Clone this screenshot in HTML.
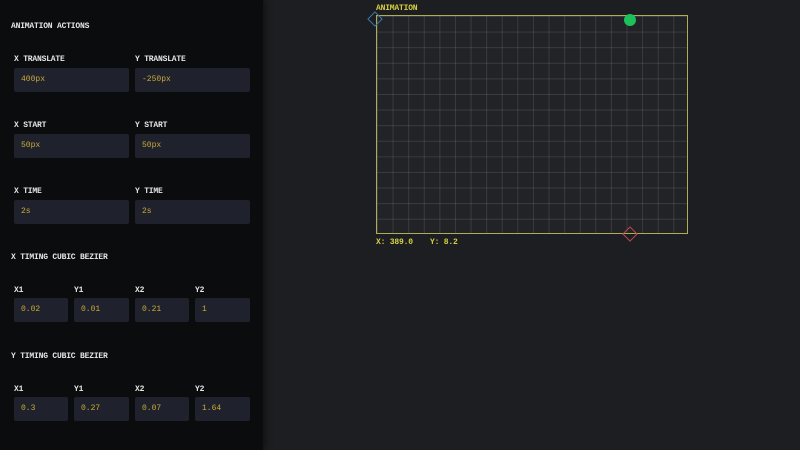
<!DOCTYPE html>
<html><head><style>
*{margin:0;padding:0;box-sizing:border-box}
body{width:800px;height:450px;background:#1d1e21;position:relative;overflow:hidden;font-family:"Liberation Mono",monospace;font-size:8px;font-weight:bold}
.panel{position:absolute;left:0;top:0;width:263px;height:450px;background:#0b0c0e;box-shadow:2px 0 6px rgba(0,0,0,.5)}
.t{position:absolute;color:#e6e6e6;white-space:nowrap;line-height:10px;letter-spacing:-0.2px}
.in{position:absolute;height:24px;background:#1f222c;border-radius:2px;color:#c9a93a;padding-left:7px;line-height:24px;font-weight:normal;font-size:8px}
.y{color:#d8d040}
</style></head><body>
<div class="panel">
<div class="t" style="left:11px;top:22px">ANIMATION ACTIONS</div>
<div class="t" style="left:14px;top:55px">X TRANSLATE</div><div class="t" style="left:135px;top:55px">Y TRANSLATE</div>
<div class="in" style="left:14px;top:68px;width:115px">400px</div><div class="in" style="left:135px;top:68px;width:115px">-250px</div>
<div class="t" style="left:14px;top:121px">X START</div><div class="t" style="left:135px;top:121px">Y START</div>
<div class="in" style="left:14px;top:134px;width:115px">50px</div><div class="in" style="left:135px;top:134px;width:115px">50px</div>
<div class="t" style="left:14px;top:187px">X TIME</div><div class="t" style="left:135px;top:187px">Y TIME</div>
<div class="in" style="left:14px;top:200px;width:115px">2s</div><div class="in" style="left:135px;top:200px;width:115px">2s</div>
<div class="t" style="left:11px;top:253px">X TIMING CUBIC BEZIER</div>
<div class="t" style="left:14px;top:286px">X1</div><div class="t" style="left:74px;top:286px">Y1</div><div class="t" style="left:135px;top:286px">X2</div><div class="t" style="left:195px;top:286px">Y2</div>
<div class="in" style="left:14px;top:298px;width:54px">0.02</div><div class="in" style="left:74px;top:298px;width:55px">0.01</div><div class="in" style="left:135px;top:298px;width:54px">0.21</div><div class="in" style="left:195px;top:298px;width:55px">1</div>
<div class="t" style="left:11px;top:352px">Y TIMING CUBIC BEZIER</div>
<div class="t" style="left:14px;top:385px">X1</div><div class="t" style="left:74px;top:385px">Y1</div><div class="t" style="left:135px;top:385px">X2</div><div class="t" style="left:195px;top:385px">Y2</div>
<div class="in" style="left:14px;top:397px;width:54px">0.3</div><div class="in" style="left:74px;top:397px;width:55px">0.27</div><div class="in" style="left:135px;top:397px;width:54px">0.07</div><div class="in" style="left:195px;top:397px;width:55px">1.64</div>
</div>
<div class="t y" style="left:376px;top:4px">ANIMATION</div>
<div style="position:absolute;left:376px;top:15px;width:312px;height:219px;border:1px solid #b0ac5a;background-color:#222327;background-image:linear-gradient(to right,rgba(255,255,255,.11) 1px,transparent 1px),linear-gradient(to bottom,rgba(255,255,255,.11) 1px,transparent 1px);background-size:15.6px 15.6px"></div>
<svg style="position:absolute;left:0;top:0" width="800" height="450">
<rect x="370" y="14" width="10" height="10" transform="rotate(45 375 19)" fill="none" stroke="#3c7aa8" stroke-width="1"/>
<rect x="625" y="229" width="10" height="10" transform="rotate(45 630 234)" fill="none" stroke="#c04848" stroke-width="1"/>
<circle cx="630" cy="20" r="6" fill="#1ec05a"/>
</svg>
<div class="t y" style="left:376px;top:238px">X: 389.0</div>
<div class="t y" style="left:430px;top:238px">Y: 8.2</div>
</body></html>
